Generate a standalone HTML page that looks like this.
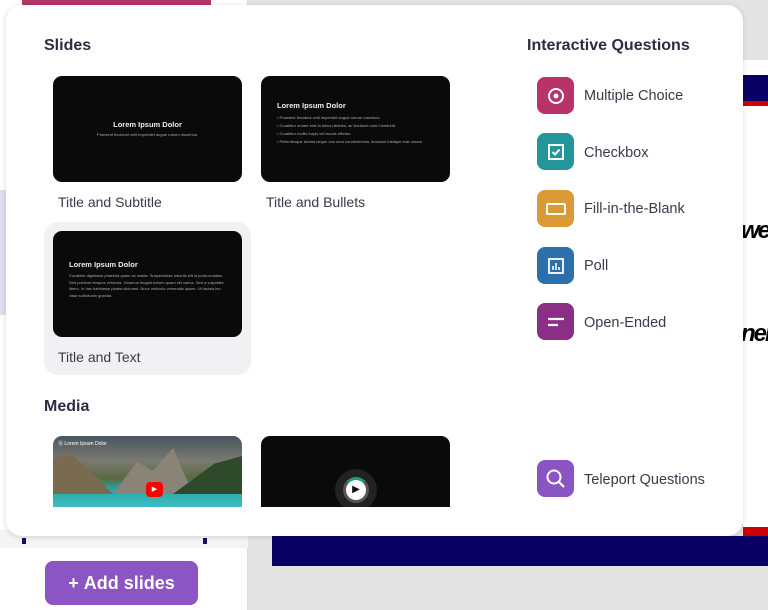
<!DOCTYPE html>
<html><head><meta charset="utf-8"><style>
*{box-sizing:border-box;margin:0;padding:0}
body{width:768px;height:610px;overflow:hidden;position:relative;background:#e4e4e4;font-family:"Liberation Sans",sans-serif;color:#33334a}
.abs{position:absolute}
.thumb{position:absolute;background:#0a0a0a;border-radius:9px;color:#fff;overflow:hidden}
.thumb h4{font-size:7.5px;font-weight:bold;color:#eee}
.thumb p{font-size:4px;color:#aaa;line-height:6.5px}
.lbl{position:absolute;font-size:14px;color:#3a3a4c}
.h{position:absolute;font-size:16px;font-weight:bold;color:#2d2d42}
.ic{position:absolute;left:537px;width:37px;height:37px;border-radius:8px;display:flex;align-items:center;justify-content:center}
.qt{position:absolute;left:584px;font-size:14.5px;color:#3a3a4c}
</style></head><body>
<div class="abs" style="left:0;top:0;width:248px;height:610px;background:#fff;border-right:1px solid #ddd"></div>
<div class="abs" style="left:22px;top:0;width:189px;height:8px;background:#b63669"></div>
<div class="abs" style="left:0;top:190px;width:8px;height:125px;background:#e4dcf0"></div>
<div class="abs" style="left:0;top:530px;width:248px;height:18px;background:#f4f4f4"></div>
<div class="abs" style="left:22px;top:538px;width:4px;height:6px;background:#1a0a6a"></div>
<div class="abs" style="left:203px;top:538px;width:4px;height:6px;background:#1a0a6a"></div>
<div class="abs" style="left:743px;top:60px;width:25px;height:475px;background:#fff"></div>
<div class="abs" style="left:743px;top:75px;width:25px;height:26px;background:#0a0064"></div>
<div class="abs" style="left:743px;top:101px;width:25px;height:5px;background:#c00"></div>
<div class="abs" style="left:741px;top:217px;font-size:24px;font-weight:bold;font-style:italic;color:#000;letter-spacing:-2px">wer</div>
<div class="abs" style="left:741px;top:320px;font-size:24px;font-weight:bold;font-style:italic;color:#000;letter-spacing:-2px">ner</div>
<div class="abs" style="left:743px;top:527px;width:25px;height:9px;background:#c00"></div>
<div class="abs" style="left:272px;top:536px;width:496px;height:30px;background:#0a0064"></div>
<div class="abs" style="left:45px;top:561px;width:153px;height:44px;background:#8b55c3;border-radius:8px;color:#fff;font-size:18px;font-weight:bold;display:flex;align-items:center;justify-content:center">+&nbsp;Add slides</div>

<div class="abs" style="left:6px;top:5px;width:737px;height:531px;background:#fff;border-radius:16px;box-shadow:0 1px 6px rgba(0,0,0,.15)"></div>
<div class="h" style="left:44px;top:37px">Slides</div>
<div class="h" style="left:527px;top:37px">Interactive Questions</div>

<div class="thumb" style="left:53px;top:76px;width:189px;height:106px;text-align:center;padding-top:44px"><h4>Lorem Ipsum Dolor</h4><p style="margin-top:3px">Praesent tincidunt velit imperdiet augue rutrum maximus.</p></div>
<div class="lbl" style="left:58px;top:194px">Title and Subtitle</div>
<div class="thumb" style="left:261px;top:76px;width:189px;height:106px;padding:25px 15px 0 16px"><h4>Lorem Ipsum Dolor</h4><p style="margin-top:4px;line-height:8px">• Praesent tincidunt velit imperdiet augue rutrum maximus.<br>• Curabitur ornare erat in tellus ultricies, ac tincidunt nunc hendrerit.<br>• Curabitur mollis turpis vel iaculis efficitur.<br>• Pellentesque lacinia neque non arcu condimentum, tincidunt tristique erat ornare.</p></div>
<div class="lbl" style="left:266px;top:194px">Title and Bullets</div>

<div class="abs" style="left:44px;top:222px;width:207px;height:153px;background:#f1f1f3;border-radius:14px"></div>
<div class="thumb" style="left:53px;top:231px;width:189px;height:106px;padding:29px 15px 0 16px"><h4>Lorem Ipsum Dolor</h4><p style="margin-top:4px">Curabitur dignissim pharetra quam ac mattis. Suspendisse lobortis elit id porta sodales. Sed pulvinar tempus vehicula. Vivamus feugiat rutrum quam vel varius. Sed a vulputate libero. In hac habitasse platea dictumst. Nunc vehicula venenatis ipsum. Ut lacinia leo vitae sollicitudin gravida.</p></div>
<div class="lbl" style="left:58px;top:349px">Title and Text</div>

<div class="h" style="left:44px;top:398px">Media</div>
<div class="abs" style="left:53px;top:436px;width:189px;height:71px;border-radius:9px 9px 0 0;overflow:hidden;background:linear-gradient(180deg,#4a5560 0%,#7a7a70 35%,#5a6a40 60%,#2aa5a8 75%,#3cc0c0 100%)">
<div class="abs" style="left:0;top:18px;width:60px;height:40px;background:#7a6a50;clip-path:polygon(0 100%,0 10%,30% 0,60% 40%,100% 100%)"></div>
<div class="abs" style="left:60px;top:12px;width:80px;height:46px;background:#8a8478;clip-path:polygon(0 100%,30% 30%,50% 50%,75% 0,100% 100%)"></div>
<div class="abs" style="left:120px;top:20px;width:69px;height:38px;background:#2e4a2a;clip-path:polygon(0 100%,60% 20%,100% 0,100% 100%)"></div>
<div class="abs" style="left:5px;top:4px;font-size:5px;color:#fff">Ⓠ Lorem Ipsum Dolor</div>
<div class="abs" style="left:93px;top:46px;width:17px;height:15px;background:#f00;border-radius:4px;color:#fff;font-size:7px;text-align:center;line-height:15px">▶</div>
</div>
<div class="abs" style="left:261px;top:436px;width:189px;height:71px;border-radius:9px 9px 0 0;background:#0a0a0a;overflow:hidden">
<div class="abs" style="left:74px;top:33px;width:42px;height:42px;border-radius:50%;background:#222"></div>
<div class="abs" style="left:82px;top:41px;width:26px;height:26px;border-radius:50%;border:3px solid #555;border-top-color:#1aa06a;background:#fff;color:#111;font-size:10px;text-align:center;line-height:20px">▶</div>
</div>

<div class="ic" style="top:77px;background:#b9326a"><svg width="18" height="18"><circle cx="9" cy="9" r="7" fill="none" stroke="#fff" stroke-width="2"/><circle cx="9" cy="9" r="2.5" fill="#fff"/></svg></div>
<div class="qt" style="top:88px">Multiple Choice</div>
<div class="ic" style="top:133px;background:#22969a"><svg width="16" height="16"><rect x="1" y="1" width="14" height="14" fill="none" stroke="#fff" stroke-width="2"/><path d="M4.5 8l2.5 2.5 4.5-5" fill="none" stroke="#fff" stroke-width="2"/></svg></div>
<div class="qt" style="top:145px">Checkbox</div>
<div class="ic" style="top:190px;background:#db9a35"><svg width="20" height="12"><rect x="1" y="1" width="18" height="10" rx="1" fill="none" stroke="#fff" stroke-width="2"/></svg></div>
<div class="qt" style="top:201px">Fill-in-the-Blank</div>
<div class="ic" style="top:247px;background:#2c6fad"><svg width="16" height="16"><rect x="1" y="1" width="14" height="14" fill="none" stroke="#fff" stroke-width="1.8"/><path d="M5 12V8M8 12V5M11 12V9" stroke="#fff" stroke-width="1.6"/></svg></div>
<div class="qt" style="top:258px">Poll</div>
<div class="ic" style="top:303px;background:#8a2f85"><svg width="18" height="10"><path d="M1 2h16M1 8h10" stroke="#fff" stroke-width="2.2"/></svg></div>
<div class="qt" style="top:315px">Open-Ended</div>
<div class="ic" style="top:460px;background:#8a55c3"><svg width="22" height="22"><circle cx="9" cy="9" r="6.5" fill="none" stroke="#fff" stroke-width="2"/><path d="M14 14l5 5" stroke="#fff" stroke-width="2.2"/></svg></div>
<div class="qt" style="top:472px">Teleport Questions</div>
</body></html>
